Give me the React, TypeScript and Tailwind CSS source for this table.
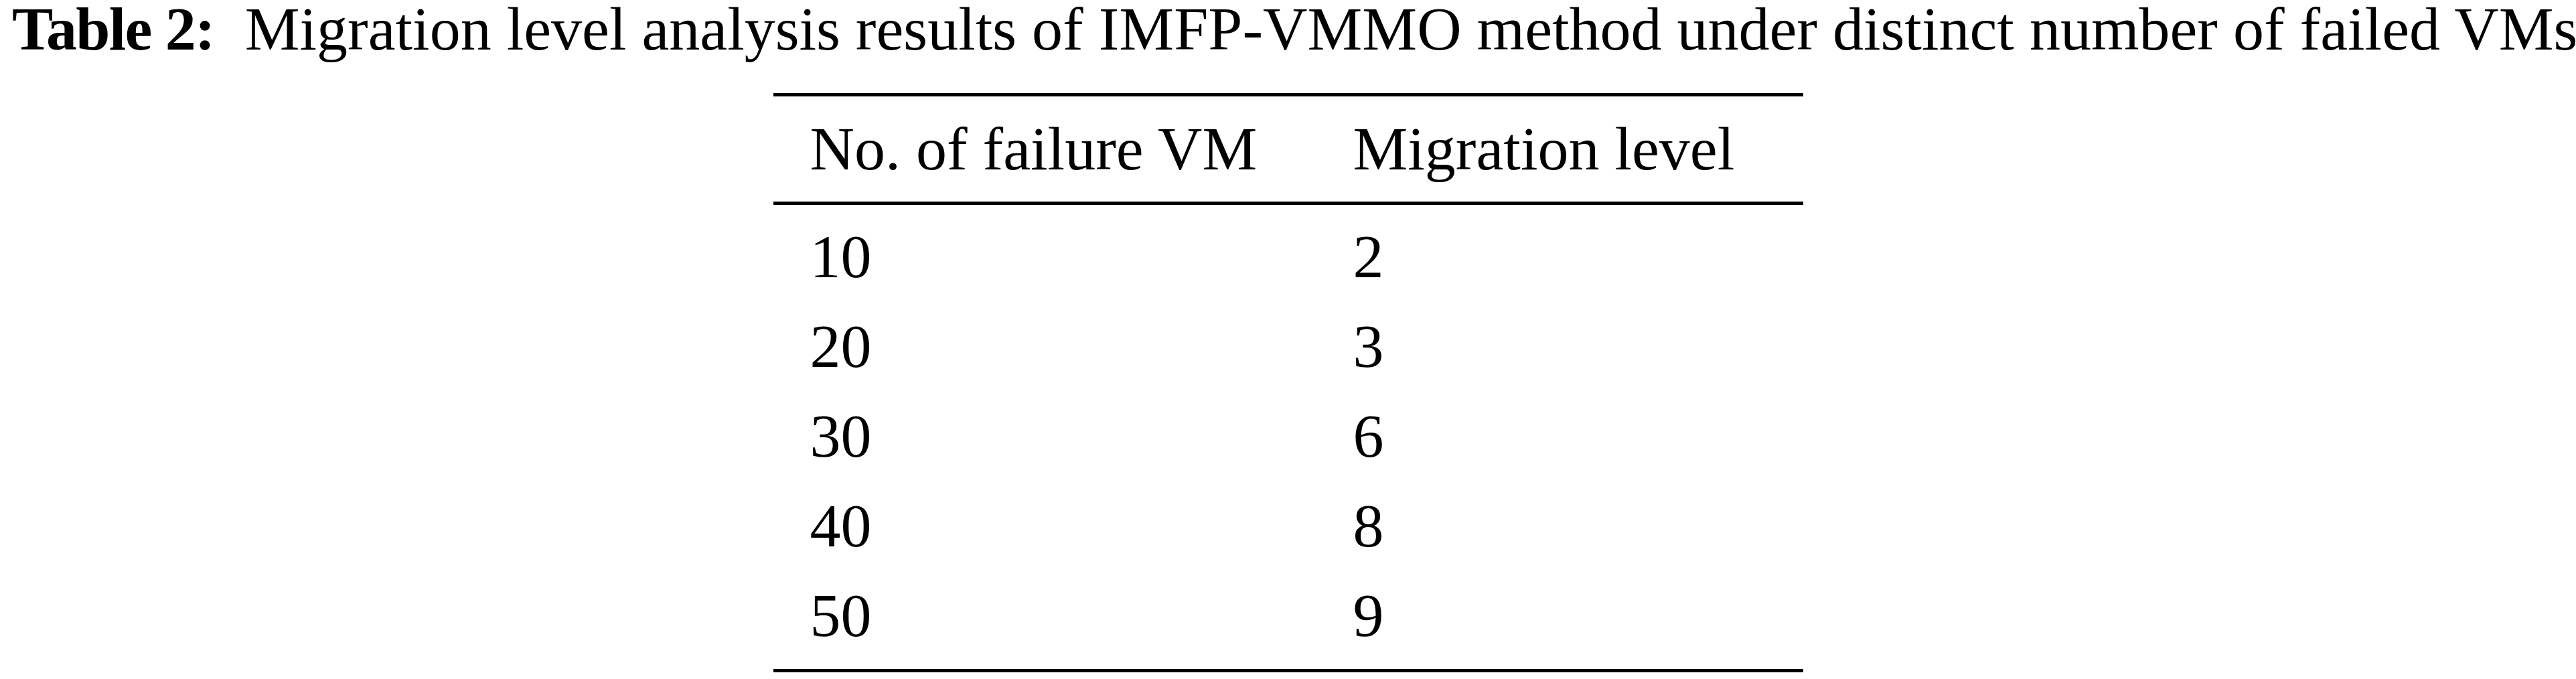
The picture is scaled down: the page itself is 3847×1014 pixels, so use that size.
const rows: [string, string][] = [
  ["10", "2"],
  ["20", "3"],
  ["30", "6"],
  ["40", "8"],
  ["50", "9"],
];

export default function App() {
  return (
    <div className="min-h-screen bg-white text-black font-['Liberation_Serif','Times_New_Roman',serif]">
      <h1 className="whitespace-nowrap pl-[18px] text-[92px] font-normal leading-[86px]">
        <span className="font-bold tracking-[-1.8px]">Table 2:</span>
        {"\u00a0 "}Migration level analysis results of IMFP-VMMO method under distinct number of failed VMs
      </h1>

      <div className="mx-auto mt-[53px] w-[1538px] border-y-[5px] border-black text-[92px]">
        <div className="grid grid-cols-[866px_1fr] border-b-[5px] border-black pt-[11px] pb-[12px] leading-[134px]">
          <span className="pl-[55px]">No. of failure VM</span>
          <span>Migration level</span>
        </div>
        <div className="pt-[10px] pb-[13px] leading-[134px]">
          {rows.map(([vm, level]) => (
            <div key={vm} className="grid grid-cols-[866px_1fr]">
              <span className="pl-[55px]">{vm}</span>
              <span>{level}</span>
            </div>
          ))}
        </div>
      </div>
    </div>
  );
}
